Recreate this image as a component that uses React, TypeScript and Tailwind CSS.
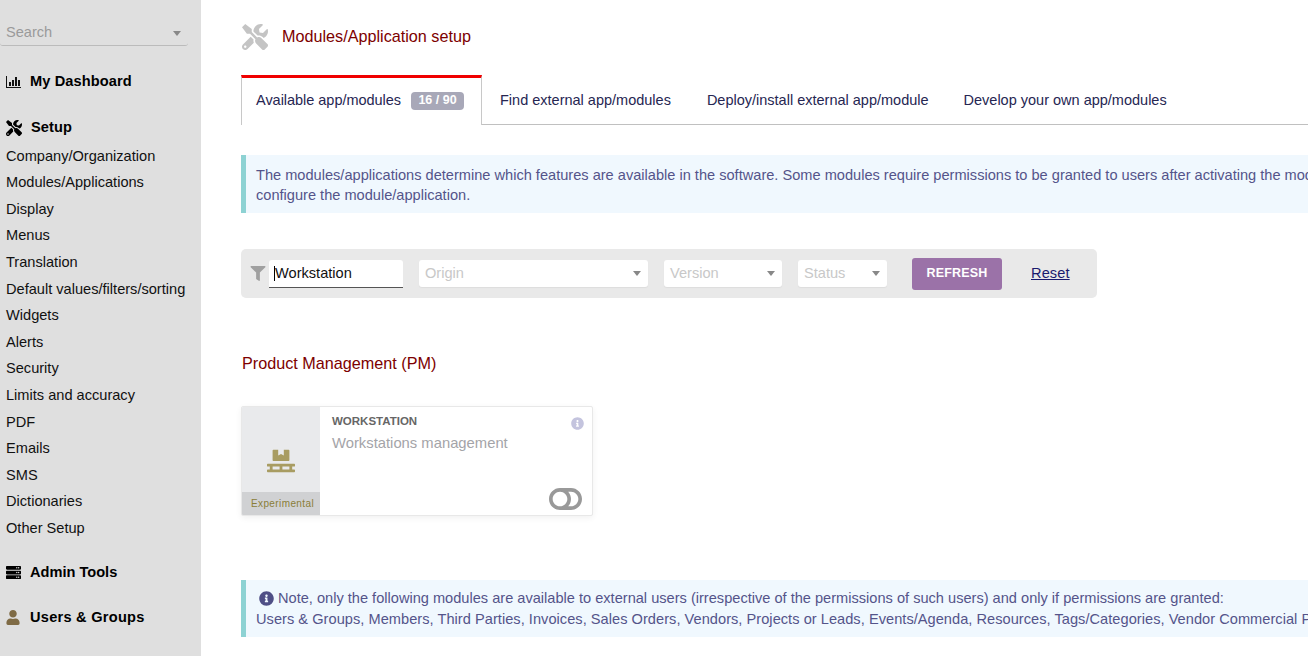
import React from "react";
import { FaTools, FaServer, FaUser, FaFilter, FaPallet, FaInfoCircle, FaToggleOff } from "react-icons/fa";

const setup = ["Company/Organization","Modules/Applications","Display","Menus","Translation","Default values/filters/sorting","Widgets","Alerts","Security","Limits and accuracy","PDF","Emails","SMS","Dictionaries","Other Setup"];

function Caret() {
  return <span className="w-0 h-0 border-x-[4px] border-x-transparent border-t-[5px] border-t-[#888]" />;
}

function ChartIcon() {
  return (
    <svg width="15" height="12" viewBox="0 0 15 12" className="shrink-0" fill="#111">
      <rect x="0" y="0" width="1" height="12" />
      <rect x="0" y="11" width="15" height="1" />
      <rect x="3" y="6" width="2" height="4" />
      <rect x="6" y="4" width="2" height="6" />
      <rect x="9" y="1" width="2" height="9" />
      <rect x="12" y="4" width="2" height="6" />
    </svg>
  );
}

function Select({ label, width }: { label: string; width: string }) {
  return (
    <div className={`${width} h-[27px] bg-white rounded-[3px] shadow-[0_1px_1px_#ddd] flex items-center justify-between pl-[6px] pr-[7px]`}>
      <span className="text-[#c8c8c8] text-[14.6px]">{label}</span>
      <Caret />
    </div>
  );
}

export default function App() {
  return (
    <div className="w-[1308px] h-[656px] overflow-hidden flex bg-white font-['Liberation_Sans',Arial,sans-serif] text-[14.6px]">
      <aside className="w-[201px] shrink-0 h-full bg-[#dfdfdf] text-[#111]">
        <div className="mt-[19px] w-[188px] h-[27px] border-b border-[#bbb] rounded-b-[3px] flex items-center justify-between pl-[6px] pr-[7px] pt-[2px]">
          <span className="text-[#9a9a9a]">Search</span>
          <Caret />
        </div>
        <div className="mt-[26px] ml-[6px] h-[20px] flex items-center font-bold text-black">
          <ChartIcon />
          <span className="ml-[9px] tracking-[0.1px]">My Dashboard</span>
        </div>
        <div className="mt-[26px] ml-[6px] h-[20px] flex items-center font-bold text-black">
          <FaTools className="w-[16px] h-[16px]" />
          <span className="ml-[9px] tracking-[0.1px]">Setup</span>
        </div>
        <ul className="mt-[4.6px] pl-[6px]">
          {setup.map((s) => (
            <li key={s} className="h-[26.6px] leading-[26.6px] whitespace-nowrap">{s}</li>
          ))}
        </ul>
        <div className="mt-[21.4px] ml-[6px] h-[20px] flex items-center font-bold text-black">
          <FaServer className="w-[15px] h-[15px]" />
          <span className="ml-[9px]">Admin Tools</span>
        </div>
        <div className="mt-[25px] ml-[6px] h-[20px] flex items-center font-bold text-black">
          <FaUser className="w-[14px] h-[15px] text-[#7f6b45]" />
          <span className="ml-[10px] tracking-[0.25px]">Users &amp; Groups</span>
        </div>
      </aside>

      <main className="flex-1 min-w-0 overflow-hidden pl-[40px]">
        <div className="mt-[23px] h-[27px] flex items-center">
          <FaTools className="ml-px w-[26px] h-[26px] text-[#c4c4c4]" />
          <h1 className="ml-[14px] text-[16.2px] text-[#7d0000] font-normal">Modules/Application setup</h1>
        </div>

        <div className="mt-[25px] h-[50px] flex border-b border-[#c0c0c0] text-[#262652] text-[14.5px] whitespace-nowrap">
          <div className="w-[241px] h-[50px] border-t-[3px] border-t-[#f00000] border-x border-x-[#c8c8c8] bg-white flex items-center pl-[14px] pb-[2px]">
            <span className="tracking-[-0.03px]">Available app/modules</span>
            <span className="ml-[10px] w-[53px] h-[18px] rounded-[4px] bg-[#a8a8b8] text-white text-[12.5px] font-bold flex items-center justify-center">16 / 90</span>
          </div>
          <div className="pl-[18px] flex items-center pt-[2px]">Find external app/modules</div>
          <div className="pl-[36px] flex items-center pt-[2px]">Deploy/install external app/module</div>
          <div className="pl-[35px] flex items-center pt-[2px]">Develop your own app/modules</div>
        </div>

        <div className="mt-[30px] h-[58px] w-[1100px] bg-[#f0f8fe] border-l-[5px] border-l-[#8dd2d3] pl-[10px] pt-[9px] text-[#54548a] leading-[21px] whitespace-nowrap overflow-hidden">
          <div className="pt-px">The modules/applications determine which features are available in the software. Some modules require permissions to be granted to users after activating the module. Click the</div>
          <div className="-mt-px">configure the module/application.</div>
        </div>

        <div className="mt-[36px] w-[856px] h-[49px] bg-[#e9e9e9] rounded-[5px] flex items-center pl-[9px]">
          <FaFilter className="w-[16px] h-[15px] text-[#a0a0a0]" />
          <div className="ml-[3px] w-[134px] h-[28px] bg-white rounded-t-[3px] border-b border-[#555] flex items-center pl-[5px] pt-[1px]">
            <span className="w-px h-[15px] bg-black" />
            <span className="text-[#111]">Workstation</span>
          </div>
          <div className="ml-[16px]"><Select label="Origin" width="w-[229px]" /></div>
          <div className="ml-[16px]"><Select label="Version" width="w-[118px]" /></div>
          <div className="ml-[16px]"><Select label="Status" width="w-[89px]" /></div>
          <button className="ml-[25px] w-[90px] h-[32px] bg-[#9b72a8] rounded-[3px] text-white text-[12.5px] font-bold tracking-[0.2px]">REFRESH</button>
          <a className="ml-[29px] text-[#1a1a6e] underline tracking-[0.1px]">Reset</a>
        </div>

        <h2 className="mt-[55px] ml-px h-[20px] leading-[20px] text-[16.2px] text-[#7d0000] font-normal">Product Management (PM)</h2>

        <div className="mt-[33px] w-[352px] h-[110px] flex bg-white border border-[#e8e8e8] rounded-[2px] shadow-[0_2px_6px_rgba(0,0,0,0.06)] overflow-hidden">
          <div className="w-[78px] shrink-0 flex flex-col bg-[#e9eaec]">
            <div className="flex-1 flex items-center justify-center pt-[23px]">
              <FaPallet className="w-[28px] h-[26px] text-[#a89c62]" />
            </div>
            <div className="h-[23px] bg-[#d0d1d3] text-[#8a7d38] text-[10px] tracking-[0.4px] flex items-center justify-center pl-[3px]">Experimental</div>
          </div>
          <div className="flex-1 relative pl-[12px] pt-[7px]">
            <div className="text-[11.5px] font-bold text-[#666] leading-[14px]">WORKSTATION</div>
            <div className="mt-[6px] text-[14.8px] text-[#a4a4a8] leading-[18px]">Workstations management</div>
            <FaInfoCircle className="absolute top-[10px] right-[8px] w-[13px] h-[13px] text-[#c4c4de]" />
            <FaToggleOff className="absolute bottom-[0px] right-[10px] w-[33px] h-[32px] text-[#999]" />
          </div>
        </div>

        <div className="mt-[64px] h-[57px] w-[1100px] bg-[#f0f8fe] border-l-[5px] border-l-[#8dd2d3] pl-[10px] pt-[8px] text-[#54548a] leading-[21px] whitespace-nowrap overflow-hidden">
          <div className="flex items-center pl-[3px]">
            <FaInfoCircle className="w-[15px] h-[15px] text-[#4f4f86] mr-[4px]" />
            <span>Note, only the following modules are available to external users (irrespective of the permissions of such users) and only if permissions are granted:</span>
          </div>
          <div className="tracking-[0.035px]">Users &amp; Groups, Members, Third Parties, Invoices, Sales Orders, Vendors, Projects or Leads, Events/Agenda, Resources, Tags/Categories, Vendor Commercial Proposals, Vendor Orders</div>
        </div>
      </main>
    </div>
  );
}
